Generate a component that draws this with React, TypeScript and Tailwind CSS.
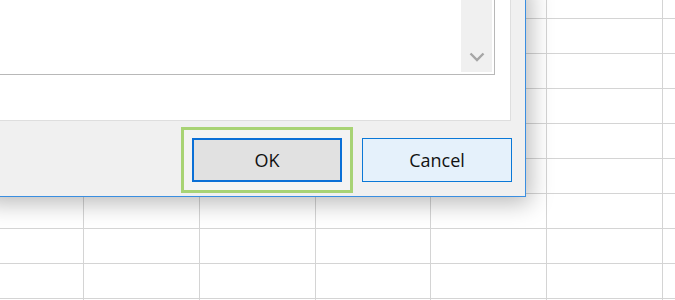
import React from "react";

const colW = [84, 116, 116, 115, 116, 116, 40];
const rowH = [19, 35, 35, 35, 35, 35, 35, 35, 35, 20];

export default function App() {
  return (
    <div
      className="relative w-[675px] h-[300px] overflow-hidden bg-white"
      style={{ fontFamily: '"Segoe UI", "Open Sans", "Noto Sans", sans-serif' }}
    >
      {/* spreadsheet grid */}
      <div className="flex flex-col">
        {rowH.map((h, r) => (
          <div key={r} className="flex shrink-0" style={{ height: h }}>
            {colW.map((w, c) => (
              <div
                key={c}
                className="shrink-0 border-r border-b border-[#d4d4d4]"
                style={{ width: w }}
              />
            ))}
          </div>
        ))}
      </div>

      {/* dialog window */}
      <div className="absolute left-[-20px] top-[-20px] w-[546px] flex flex-col border border-[#3a8ee0] bg-[#f0f0f0] pr-[14px] pb-[3px] shadow-[4px_6px_22px_rgba(0,0,0,0.28)]">
        <div className="h-[140px] bg-white border-r border-b border-[#dedede]">
          <div className="w-[514px] h-[94px] flex justify-end border-r border-b border-[#b8b8b8] pr-[2px] pb-[2px]">
            <div className="w-[31px] bg-[#f0f0f0] flex items-end justify-center pb-[10px]">
              <svg width="16" height="10" viewBox="0 0 16 10">
                <path d="M1.5 1.5 L8 8 L14.5 1.5" fill="none" stroke="#a6a6a6" strokeWidth="2.4" />
              </svg>
            </div>
          </div>
        </div>

        <div className="mt-[6px] -mr-px flex justify-end items-center gap-[9px]">
          <div className="border-[3px] border-[#a8d374] p-[8px] bg-[#f3f3f3]">
            <div className="w-[150px] h-[44px] flex items-center justify-center bg-[#e1e1e1] border-2 border-[#0a6fd6] text-[18px] text-[#111]">
              OK
            </div>
          </div>
          <div className="w-[150px] h-[44px] flex items-center justify-center bg-[#e5f1fb] border border-[#0a78d7] text-[18px] text-[#111]">
            Cancel
          </div>
        </div>
      </div>
    </div>
  );
}
